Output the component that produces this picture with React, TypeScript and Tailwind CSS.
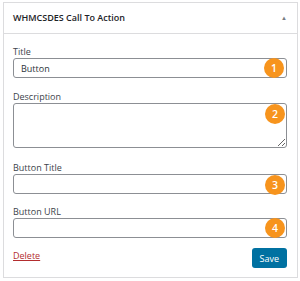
import type { ReactNode } from 'react'

// ── helpers ───────────────────────────────────────────────────────────────────

const FONT = { fontFamily: '"Open Sans", "Noto Sans", sans-serif' }

const INPUT_CLS =
  'block w-full h-[20px] border border-[#8c8f94] rounded-[3px] bg-white px-[7px] text-[9px] text-[#2c3338] outline-none'

function Badge({ n, className }: { n: number; className: string }) {
  return (
    <span
      className={`absolute flex items-center justify-center w-[20px] h-[20px] rounded-full bg-[#f7941d] text-white text-[10.5px] font-semibold leading-none ${className}`}
    >
      {n}
    </span>
  )
}

function Field({ label, className, children }: { label: string; className: string; children: ReactNode }) {
  return (
    <div className={className}>
      <label className="block h-[12px] leading-[12px] text-[9px] text-[#3c434a]">{label}</label>
      <div className="relative">{children}</div>
    </div>
  )
}

// ── App ───────────────────────────────────────────────────────────────────────

export default function App() {
  return (
    <div className="w-[300px] h-[281px] bg-white pt-[2px] pl-[3px]" style={FONT}>
      <div className="w-[295px] h-[276px] border border-[#dcdcde] bg-white flex flex-col">
        {/* Widget header */}
        <div className="h-[31px] flex items-center justify-between border-b border-[#dcdcde] pl-[9px] pr-[10px]">
          <span className="text-[9px] font-semibold text-[#1d2327]">WHMCSDES Call To Action</span>
          <span className="text-[6px] text-[#787c82] leading-none">▲</span>
        </div>

        {/* Widget body */}
        <div className="flex flex-col pl-[9px] pr-[10px]">
          <Field label="Title" className="mt-[12px]">
            <input className={INPUT_CLS} defaultValue="Button" />
            <Badge n={1} className="right-[3px] top-0" />
          </Field>

          <Field label="Description" className="mt-[13px]">
            <textarea className="block w-full h-[45px] border border-[#8c8f94] rounded-[3px] bg-white px-[7px] text-[9px] outline-none" />
            <Badge n={2} className="right-[2px] top-[1px]" />
          </Field>

          <Field label="Button Title" className="mt-[14px]">
            <input className={INPUT_CLS} />
            <Badge n={3} className="right-[2px] top-[1px]" />
          </Field>

          <Field label="Button URL" className="mt-[12px]">
            <input className={INPUT_CLS} />
            <Badge n={4} className="right-[2px] top-0" />
          </Field>

          <div className="mt-[10px] flex items-start justify-between">
            <a href="#" className="mt-[1px] text-[9px] text-[#b32d2e] underline">Delete</a>
            <button className="h-[20px] px-[8px] rounded-[3px] bg-[#0071a1] text-white text-[9px] leading-none">
              Save
            </button>
          </div>
        </div>
      </div>
    </div>
  )
}
